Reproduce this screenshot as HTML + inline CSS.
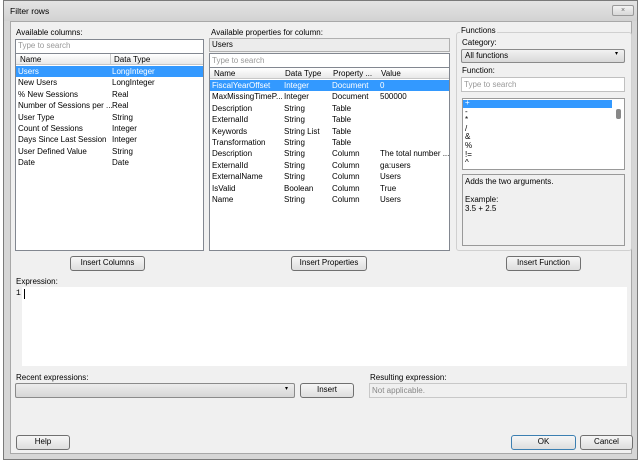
<!DOCTYPE html>
<html><head><style>
*{margin:0;padding:0;box-sizing:border-box}
body{width:640px;height:467px;background:#fff;position:relative;overflow:hidden;font-family:"Liberation Sans",sans-serif;font-size:8px;color:#000}
.a{position:absolute}
.frame{left:3px;top:0;width:635px;height:460px;background:#d6d6d6;border:1px solid #7a7a7a}
.title{left:4px;top:1px;width:633px;height:20px;background:linear-gradient(#e4e4e4,#d2d2d2)}
.client{left:10px;top:21px;width:622px;height:433px;background:#f0f0f0;border:1px solid #a8a8a8}
.box{background:#fff;border:1px solid #828790}
.hdr{background:linear-gradient(#fff,#e8e8e8);border-bottom:1px solid #c8c8c8;height:11px}
.sel{background:#3399ff;color:#fff}
.btn{background:linear-gradient(#f6f6f6,#dedede);border:1px solid #707070;border-radius:3px;text-align:center;line-height:12px;font-size:8px}
.ph{color:#999}
.row{position:absolute;height:11px;line-height:11px;white-space:nowrap}
</style></head><body>
<div class="a frame"></div>
<div class="a title"></div>
<div class="a" style="left:10px;top:6px;font-size:8.5px">Filter rows</div>
<div class="a" style="left:612px;top:5px;width:22px;height:11px;border:1px solid #999;border-radius:2px;background:linear-gradient(#f2f2f2,#d8d8d8);font-size:7px;text-align:center;line-height:9px;color:#666">×</div>
<div class="a client"></div>

<div class="a" style="left:16px;top:28px">Available columns:</div>
<div class="a box" style="left:15px;top:39px;width:189px;height:212px"></div>
<div class="a ph" style="left:18px;top:41px">Type to search</div>
<div class="a" style="left:16px;top:53px;width:187px;height:1px;background:#828790"></div>
<div class="a hdr" style="left:16px;top:54px;width:187px"></div>
<div class="a" style="left:20px;top:55px">Name</div>
<div class="a" style="left:110px;top:54px;width:1px;height:10px;background:#ccc"></div>
<div class="a" style="left:114px;top:55px">Data Type</div>
<div class="a sel" style="left:16px;top:66px;width:187px;height:11px"></div>
<div class="a" style="left:18px;top:66px;line-height:11.4px;width:190px">
<div style="height:11.4px;color:#fff">Users</div><div>New Users</div><div>% New Sessions</div><div>Number of Sessions per ...</div><div>User Type</div><div>Count of Sessions</div><div>Days Since Last Session</div><div>User Defined Value</div><div>Date</div></div>
<div class="a" style="left:112px;top:66px;line-height:11.4px">
<div style="color:#fff">LongInteger</div><div>LongInteger</div><div>Real</div><div>Real</div><div>String</div><div>Integer</div><div>Integer</div><div>String</div><div>Date</div></div>

<div class="a" style="left:211px;top:28px">Available properties for column:</div>
<div class="a" style="left:209px;top:38px;width:241px;height:14px;border:1px solid #b0b0b0;background:#ececec"></div>
<div class="a" style="left:212px;top:40px">Users</div>
<div class="a box" style="left:209px;top:53px;width:241px;height:198px"></div>
<div class="a ph" style="left:212px;top:56px">Type to search</div>
<div class="a" style="left:210px;top:67px;width:239px;height:1px;background:#828790"></div>
<div class="a hdr" style="left:210px;top:68px;width:239px"></div>
<div class="a" style="left:214px;top:69px">Name</div>
<div class="a" style="left:285px;top:69px">Data Type</div>
<div class="a" style="left:333px;top:69px">Property ...</div>
<div class="a" style="left:381px;top:69px">Value</div>
<div class="a sel" style="left:210px;top:80px;width:239px;height:11px"></div>
<div class="a" style="left:212px;top:80px;line-height:11.4px"><div style="color:#fff">FiscalYearOffset</div><div>MaxMissingTimeP...</div><div>Description</div><div>ExternalId</div><div>Keywords</div><div>Transformation</div><div>Description</div><div>ExternalId</div><div>ExternalName</div><div>IsValid</div><div>Name</div></div>
<div class="a" style="left:284px;top:80px;line-height:11.4px"><div style="color:#fff">Integer</div><div>Integer</div><div>String</div><div>String</div><div>String List</div><div>String</div><div>String</div><div>String</div><div>String</div><div>Boolean</div><div>String</div></div>
<div class="a" style="left:332px;top:80px;line-height:11.4px"><div style="color:#fff">Document</div><div>Document</div><div>Table</div><div>Table</div><div>Table</div><div>Table</div><div>Column</div><div>Column</div><div>Column</div><div>Column</div><div>Column</div></div>
<div class="a" style="left:380px;top:80px;line-height:11.4px"><div style="color:#fff">0</div><div>500000</div><div>&nbsp;</div><div>&nbsp;</div><div>&nbsp;</div><div>&nbsp;</div><div>The total number ...</div><div>ga:users</div><div>Users</div><div>True</div><div>Users</div></div>

<div class="a" style="left:456px;top:32px;width:176px;height:219px;border:1px solid #d0d0d0;border-radius:3px"></div>
<div class="a" style="left:460px;top:26px;background:#f0f0f0;padding:0 1px">Functions</div>
<div class="a" style="left:462px;top:38px">Category:</div>
<div class="a" style="left:461px;top:49px;width:164px;height:14px;border:1px solid #8a8a8a;border-radius:2px;background:linear-gradient(#f2f2f2,#d8d8d8)"></div>
<div class="a" style="left:465px;top:51px">All functions</div>
<div class="a" style="left:615px;top:50px;font-size:6px">▾</div>
<div class="a" style="left:462px;top:66px">Function:</div>
<div class="a box" style="left:461px;top:77px;width:164px;height:15px;border-color:#c0c0c0"></div>
<div class="a ph" style="left:464px;top:80px">Type to search</div>
<div class="a box" style="left:462px;top:98px;width:163px;height:72px;border-color:#999"></div>
<div class="a sel" style="left:463px;top:100px;width:149px;height:8px"></div>
<div class="a" style="left:465px;top:99px;line-height:8.6px;font-size:8px"><div style="color:#fff">+</div><div>-</div><div>*</div><div>/</div><div>&amp;</div><div>%</div><div>!=</div><div>^</div></div>
<div class="a" style="left:616px;top:109px;width:5px;height:10px;background:#888;border-radius:2px"></div>
<div class="a box" style="left:462px;top:174px;width:163px;height:72px;border-color:#999;background:#f0f0f0"></div>
<div class="a" style="left:465px;top:177px;line-height:9px">Adds the two arguments.<br><br>Example:<br>3.5 + 2.5</div>

<div class="a btn" style="left:70px;top:256px;width:75px;height:15px">Insert Columns</div>
<div class="a btn" style="left:291px;top:256px;width:76px;height:15px">Insert Properties</div>
<div class="a btn" style="left:506px;top:256px;width:75px;height:15px">Insert Function</div>

<div class="a" style="left:16px;top:277px">Expression:</div>
<div class="a" style="left:22px;top:287px;width:605px;height:79px;background:#fff"></div>
<div class="a" style="left:16px;top:289px;font-family:'Liberation Mono',monospace">1</div>
<div class="a" style="left:24px;top:289px;width:1px;height:10px;background:#000"></div>

<div class="a" style="left:16px;top:373px">Recent expressions:</div>
<div class="a" style="left:15px;top:383px;width:280px;height:15px;border:1px solid #8a8a8a;border-radius:2px;background:linear-gradient(#ececec,#d6d6d6)"></div>
<div class="a" style="left:285px;top:385px;font-size:6px">▾</div>
<div class="a btn" style="left:300px;top:383px;width:54px;height:15px">Insert</div>
<div class="a" style="left:370px;top:373px">Resulting expression:</div>
<div class="a" style="left:369px;top:383px;width:258px;height:15px;border:1px solid #c8c8c8;background:#f0f0f0"></div>
<div class="a ph" style="left:372px;top:386px;color:#888">Not applicable.</div>

<div class="a btn" style="left:16px;top:435px;width:54px;height:15px">Help</div>
<div class="a btn" style="left:511px;top:435px;width:65px;height:15px;border-color:#3c7fb1">OK</div>
<div class="a btn" style="left:580px;top:435px;width:53px;height:15px">Cancel</div>
</body></html>
